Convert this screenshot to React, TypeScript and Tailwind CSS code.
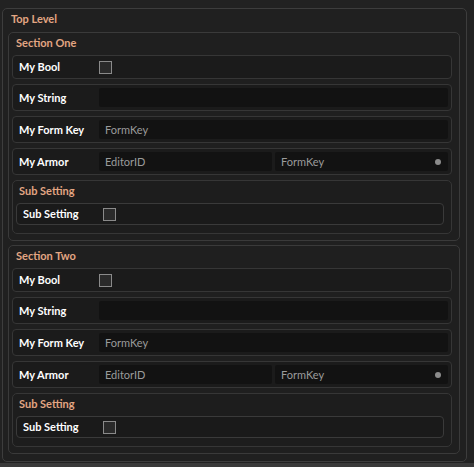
import React from 'react';

const FONT = { fontFamily: 'Lato, "Open Sans", sans-serif' };

function Title({ children }: { children: React.ReactNode }) {
  return <div className="h-[14px] text-[11px] font-bold leading-[14px] text-[#e3a683]">{children}</div>;
}

function Row({ label, children }: { label: string; children: React.ReactNode }) {
  return (
    <div className="flex items-center rounded-[4px] border border-[#363636] bg-[#1b1b1b] py-[3px] pr-[3px]">
      <div className="w-[86px] shrink-0 pl-[6px] text-[11px] font-bold leading-[14px] text-white">{label}</div>
      <div className="flex min-h-[16px] flex-1 items-center gap-[3px]">{children}</div>
    </div>
  );
}

function Checkbox() {
  return <div className="h-[13px] w-[13px] border border-[#8a8a8a] bg-[#2a2a2a]" />;
}

function Input({ placeholder, dot }: { placeholder?: string; dot?: boolean }) {
  return (
    <div className="flex h-[19px] flex-1 items-center justify-between rounded-[2px] bg-[#121212] px-[6px]">
      <span className="text-[11px] leading-[14px] text-[#9b9b9b]">{placeholder}</span>
      {dot && <span className="mr-[1px] h-[6px] w-[6px] rounded-full bg-[#8c8c8c]" />}
    </div>
  );
}

function Section({ title }: { title: string }) {
  return (
    <div className="flex flex-col rounded-[5px] border border-[#3a3a3a] bg-[#1f1f1f] pb-[6px] pl-[3px] pr-[7px] pt-[3px]">
      <div className="pl-[4px]">
        <Title>{title}</Title>
      </div>
      <div className="mt-[5px] flex flex-col gap-[5px]">
        <Row label="My Bool">
          <Checkbox />
        </Row>
        <Row label="My String">
          <Input />
        </Row>
        <Row label="My Form Key">
          <Input placeholder="FormKey" />
        </Row>
        <Row label="My Armor">
          <Input placeholder="EditorID" />
          <Input placeholder="FormKey" dot />
        </Row>
        <div className="flex flex-col rounded-[5px] border border-[#363636] bg-[#1d1d1d] pb-[8px] pl-[3px] pr-[7px] pt-[3px]">
          <div className="pl-[3px]">
            <Title>Sub Setting</Title>
          </div>
          <div className="mt-[5px] rounded-[4px] border border-[#3a3a3a] bg-[#1a1a1a] py-[3px]">
            <div className="flex items-center">
              <div className="w-[86px] shrink-0 pl-[6px] text-[11px] font-bold leading-[14px] text-white">Sub Setting</div>
              <div className="flex min-h-[14px] items-center">
                <Checkbox />
              </div>
            </div>
          </div>
        </div>
      </div>
    </div>
  );
}

export default function App() {
  return (
    <div className="flex h-[467px] w-[474px] flex-col bg-[#222222]" style={FONT}>
      <div className="ml-[2px] mt-[8px] flex w-[465px] flex-col rounded-[5px] border border-[#3d3d3d] bg-[#202020] pb-[7px] pl-[5px] pr-[6px] pt-[3px]">
        <div className="pl-[3px]">
          <Title>Top Level</Title>
        </div>
        <div className="mt-[6px] flex flex-col gap-[4px]">
          <Section title="Section One" />
          <Section title="Section Two" />
        </div>
      </div>
      <div className="mt-auto h-[4px] bg-[#3a3a3a]" />
    </div>
  );
}
